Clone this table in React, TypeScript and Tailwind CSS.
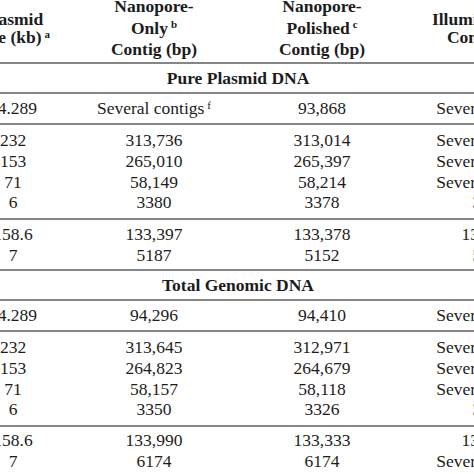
import React from 'react'

const serif = { fontFamily: '"Liberation Serif", "Times New Roman", serif' }

type Row = [React.ReactNode, React.ReactNode, React.ReactNode, React.ReactNode]

const Sup = ({ children }: { children: React.ReactNode }) => (
  <sup className="ml-[3px] text-[11px] font-normal leading-none">{children}</sup>
)

const BoldSup = ({ children }: { children: React.ReactNode }) => (
  <sup className="ml-[3px] text-[11px] leading-none">{children}</sup>
)

function Cells({ r }: { r: React.ReactNode[] }) {
  return (
    <div className="grid grid-cols-[114px_168px_168px_168px] leading-[20.7px]">
      {r.map((c, j) => (
        <div key={j} className="whitespace-nowrap text-center">
          {c}
        </div>
      ))}
    </div>
  )
}

function Group({ rows, h }: { rows: Row[]; h: string }) {
  return (
    <div className={`flex flex-col justify-center border-b-2 border-[#868686] ${h}`}>
      {rows.map((r, i) => (
        <Cells key={i} r={r} />
      ))}
    </div>
  )
}

function Section({ title }: { title: string }) {
  return (
    <div className="grid h-[30px] grid-cols-[114px_336px_168px] items-center border-b-2 border-[#868686]">
      <div />
      <div className="text-center font-bold leading-[21px]">{title}</div>
      <div />
    </div>
  )
}

export default function App() {
  const several = 'Several contigs'

  return (
    <div className="h-[474px] w-[474px] overflow-hidden bg-white text-[17.5px] text-[#1c1c1c]" style={serif}>
      <div className="ml-[-44px] w-[618px]">
        {/* en-tête, coupé en haut comme sur la capture */}
        <div className="-mt-[4px] grid h-[68px] grid-cols-[114px_168px_168px_168px] items-center border-b-2 border-[#868686] pb-[4px] font-bold leading-[21.5px]">
          <div className="text-center whitespace-nowrap leading-[18px]">
            <div>Plasmid</div>
            <div>
              Size (kb)<BoldSup>a</BoldSup>
            </div>
          </div>
          <div className="text-center whitespace-nowrap">
            <div>Nanopore-</div>
            <div>
              Only<BoldSup>b</BoldSup>
            </div>
            <div>Contig (bp)</div>
          </div>
          <div className="text-center whitespace-nowrap">
            <div>Nanopore-</div>
            <div>
              Polished<BoldSup>c</BoldSup>
            </div>
            <div>Contig (bp)</div>
          </div>
          <div className="text-center whitespace-nowrap leading-[18px]">
            <div>
              Illumina-Only<BoldSup>d</BoldSup>
            </div>
            <div>Contig (bp)</div>
          </div>
        </div>

        <Section title="Pure Plasmid DNA" />
        <Group
          h="h-[31px]"
          rows={[
            [
              '94.289',
              <>
                {several}
                <Sup>f</Sup>
              </>,
              '93,868',
              several,
            ],
          ]}
        />
        <Group
          h="h-[95px]"
          rows={[
            ['232', '313,736', '313,014', several],
            ['153', '265,010', '265,397', several],
            ['71', '58,149', '58,214', several],
            ['6', '3380', '3378', '3378'],
          ]}
        />
        <Group
          h="h-[51px]"
          rows={[
            ['158.6', '133,397', '133,378', '133,360'],
            ['7', '5187', '5152', '5190'],
          ]}
        />

        <Section title="Total Genomic DNA" />
        <Group h="h-[31px]" rows={[['94.289', '94,296', '94,410', several]]} />
        <Group
          h="h-[95px]"
          rows={[
            ['232', '313,645', '312,971', several],
            ['153', '264,823', '264,679', several],
            ['71', '58,157', '58,118', several],
            ['6', '3350', '3326', '3326'],
          ]}
        />
        <div className="pt-[3px]">
          <Cells r={['158.6', '133,990', '133,333', '133,312']} />
          <Cells r={['7', '6174', '6174', several]} />
        </div>
      </div>
    </div>
  )
}
